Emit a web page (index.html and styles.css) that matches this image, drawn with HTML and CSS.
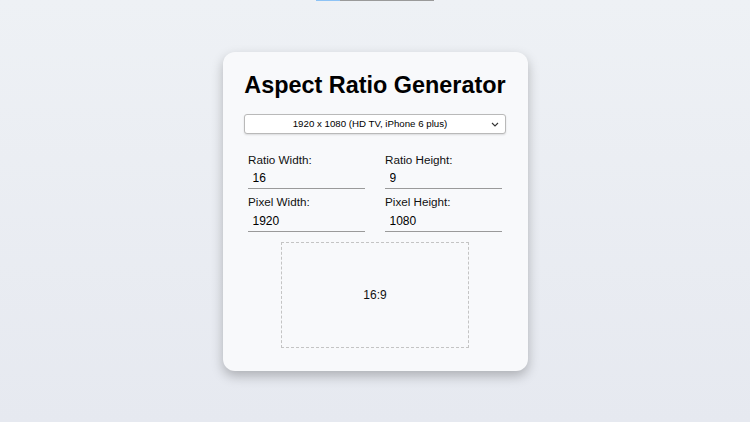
FILE: index.html
```html
<!DOCTYPE html>
<html lang="en">
<head>
<meta charset="utf-8">
<title>Aspect Ratio Generator</title>
<link rel="stylesheet" href="styles.css">
</head>
<body>
<div class="scroll-bar"><div class="scroll-fill"></div></div>
<main class="card">
  <h1 class="title">Aspect Ratio Generator</h1>
  <div class="preset-wrap">
    <select class="preset">
      <option>1920 x 1080 (HD TV, iPhone 6 plus)</option>
    </select>
    <svg class="chevron" width="8" height="5" viewBox="0 0 8 5" aria-hidden="true">
      <path d="M1 1 L4 4 L7 1" fill="none" stroke="#333" stroke-width="1.1"/>
    </svg>
  </div>
  <div class="fields">
    <label class="field">
      <span class="field-label">Ratio Width:</span>
      <input class="field-input" type="text" value="16">
    </label>
    <label class="field">
      <span class="field-label">Ratio Height:</span>
      <input class="field-input" type="text" value="9">
    </label>
    <label class="field">
      <span class="field-label">Pixel Width:</span>
      <input class="field-input" type="text" value="1920">
    </label>
    <label class="field">
      <span class="field-label">Pixel Height:</span>
      <input class="field-input" type="text" value="1080">
    </label>
  </div>
  <div class="preview">16:9</div>
</main>
</body>
</html>
```
FILE: styles.css
```css
html, body {
  margin: 0;
  padding: 0;
}

body {
  min-height: 100vh;
  display: flex;
  align-items: center;
  justify-content: center;
  background: linear-gradient(180deg, #eef1f5 0%, #e6e9f0 100%);
  font-family: "Liberation Sans", Arial, sans-serif;
  color: #000;
}

.scroll-bar {
  position: fixed;
  top: 0;
  left: 316px;
  width: 118px;
  height: 1px;
  background: #9a9a9a;
}

.scroll-fill {
  width: 24px;
  height: 100%;
  background: #8ec3f5;
}

.card {
  width: 261px;
  padding: 20px 22px 23px;
  background: #f8f9fb;
  border-radius: 12px;
  box-shadow: 0 5px 12px rgba(0, 0, 0, 0.25);
  display: flex;
  flex-direction: column;
}

.title {
  margin: 0 -12px 15px;
  font-size: 23.4px;
  font-weight: bold;
  line-height: 27px;
  text-align: center;
  white-space: nowrap;
}

.preset-wrap {
  position: relative;
  margin: 0 -0.5px 19px;
}

.preset {
  display: block;
  width: 262px;
  height: 20px;
  padding: 0 14px 0 4px;
  font-family: "Liberation Sans", Arial, sans-serif;
  font-size: 9.7px;
  text-align: center;
  text-align-last: center;
  color: #000;
  background: #fff;
  border: 1px solid #b9b9b9;
  border-radius: 3px;
  box-shadow: 0 1px 2px rgba(0, 0, 0, 0.12);
  appearance: none;
  -webkit-appearance: none;
}

.chevron {
  position: absolute;
  right: 7px;
  top: 8px;
}

.fields {
  display: grid;
  grid-template-columns: 117px 117px;
  column-gap: 20px;
  row-gap: 6px;
  padding: 0 4px 0 3.5px;
}

.field {
  display: flex;
  flex-direction: column;
}

.field-label {
  font-size: 11.7px;
  line-height: 13.5px;
  color: #111;
}

.field-input {
  box-sizing: border-box;
  width: 100%;
  margin: 0;
  padding: 5px 4px 3px 4.5px;
  font-family: "Liberation Sans", Arial, sans-serif;
  font-size: 12px;
  line-height: 14px;
  color: #000;
  background: transparent;
  border: none;
  border-bottom: 1.5px solid #9a9a9a;
  outline: none;
}

.preview {
  align-self: center;
  box-sizing: border-box;
  width: 188px;
  height: 106px;
  margin-top: 10px;
  display: flex;
  align-items: center;
  justify-content: center;
  border: 1px dashed #c4c4c4;
  font-size: 12px;
  color: #111;
}
```
